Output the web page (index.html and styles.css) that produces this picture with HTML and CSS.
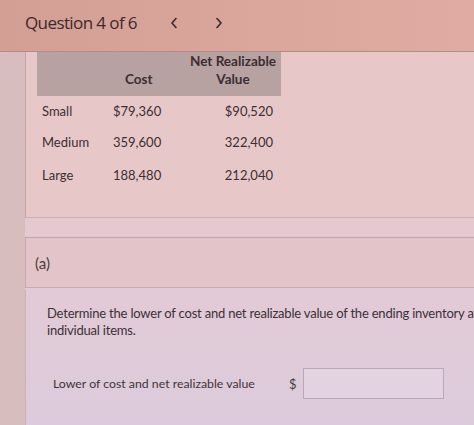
FILE: index.html
```html
<!DOCTYPE html>
<html>
<head>
<meta charset="utf-8">
<link rel="stylesheet" href="styles.css">
</head>
<body>
<div class="page">
  <header class="topbar">
    <span class="qtitle">Question 4 of 6</span>
    <span class="nav">
      <svg class="chev" width="8" height="12" viewBox="0 0 8 12"><path d="M6 1.5 L2 6 L6 10.5" fill="none" stroke="#3a2a2a" stroke-width="1.6" stroke-linecap="round" stroke-linejoin="round"/></svg>
      <svg class="chev" width="8" height="12" viewBox="0 0 8 12"><path d="M2 1.5 L6 6 L2 10.5" fill="none" stroke="#3a2a2a" stroke-width="1.6" stroke-linecap="round" stroke-linejoin="round"/></svg>
    </span>
  </header>
  <div class="main">
    <div class="rail"></div>
    <div class="content">
      <section class="card data-card">
        <table class="data">
          <colgroup>
            <col class="w-label">
            <col class="w-cost">
            <col class="w-nrv">
          </colgroup>
          <thead>
            <tr>
              <th class="c-label"></th>
              <th class="c-cost">Cost</th>
              <th class="c-nrv">Net Realizable<br>Value</th>
            </tr>
          </thead>
          <tbody>
            <tr class="r1"><td class="c-label">Small</td><td class="c-cost">$79,360</td><td class="c-nrv">$90,520</td></tr>
            <tr><td class="c-label">Medium</td><td class="c-cost">359,600</td><td class="c-nrv">322,400</td></tr>
            <tr><td class="c-label">Large</td><td class="c-cost">188,480</td><td class="c-nrv">212,040</td></tr>
          </tbody>
        </table>
      </section>
      <section class="part-head">
        <span class="part-label">(a)</span>
      </section>
      <section class="part-body">
        <p class="prompt">Determine the lower of cost and net realizable value of the ending inventory at<br>individual items.</p>
        <div class="answer-row">
          <span class="answer-label">Lower of cost and net realizable value</span>
          <span class="currency">$</span>
          <span class="answer-input"></span>
        </div>
      </section>
    </div>
  </div>
</div>
</body>
</html>
```

FILE: styles.css
```css
html, body {
  margin: 0;
  padding: 0;
}
body {
  width: 474px;
  height: 425px;
  overflow: hidden;
  font-family: "Lato", "Open Sans", sans-serif;
  color: #3b3034;
}
.page {
  width: 474px;
  height: 425px;
  display: flex;
  flex-direction: column;
  background: linear-gradient(180deg, #dcbcbc 0%, #e6c6c8 35%, #e4cad4 60%, #dccbdc 100%);
}
.topbar {
  height: 52px;
  flex: 0 0 52px;
  box-sizing: border-box;
  display: flex;
  align-items: center;
  padding-left: 25px;
  background: linear-gradient(90deg, #d39e93 0%, #dba69b 60%, #e0aba2 100%);
  border-bottom: 1px solid #b98a82;
  box-shadow: 0 1px 2px rgba(120, 70, 70, 0.35);
}
.qtitle {
  font-family: "Open Sans", sans-serif;
  font-size: 17px;
  letter-spacing: -0.6px;
  color: #3a2a2c;
  padding-bottom: 7px;
}
.nav {
  display: flex;
  gap: 37px;
  margin-left: 33px;
  padding-bottom: 5px;
}
.chev {
  display: block;
}
.main {
  flex: 1;
  display: flex;
}
.rail {
  width: 25px;
  flex: 0 0 25px;
  background: #d8bdbf;
}
.content {
  flex: 1;
  display: flex;
  flex-direction: column;
}
.card {
  border-left: 1px solid #c3a5a8;
}
.data-card {
  height: 166px;
  box-sizing: border-box;
  padding-left: 11px;
  border-bottom: 1px solid #cbb0b3;
  background: #e8c7c8;
}
.data {
  border-collapse: collapse;
  table-layout: fixed;
  width: 244px;
  font-size: 13px;
  color: #3a2f33;
}
.w-label { width: 68px; }
.w-cost { width: 80px; }
.w-nrv { width: 96px; }
.data thead tr {
  background: #b8a1a1;
  height: 44px;
}
.data th {
  font-weight: 700;
  font-size: 13.5px;
  color: #3a2e31;
  line-height: 18px;
  white-space: nowrap;
  vertical-align: bottom;
  padding: 0 0 8px 0;
}
.data th.c-cost {
  text-align: left;
  padding-left: 20px;
}
.data th.c-nrv {
  text-align: center;
}
.data td {
  height: 33px;
  padding: 0;
  white-space: nowrap;
}
.data tr.r1 td {
  height: 29px;
}
.data td.c-label {
  padding-left: 5px;
}
.data td.c-cost {
  padding-left: 8px;
}
.data td.c-nrv {
  text-align: right;
  padding-right: 8px;
}
.part-head {
  margin-top: 19px;
  height: 51px;
  box-sizing: border-box;
  border-top: 1px solid #bfa5ab;
  border-bottom: 1px solid #c4abb3;
  border-left: 1px solid #c7a9ac;
  background: #e2c4c9;
  display: flex;
  align-items: center;
  padding-left: 9px;
}
.part-label {
  font-size: 15px;
  color: #4a3d42;
  margin-top: 1px;
}
.part-body {
  flex: 1;
  margin-top: 2px;
  border-left: 1px solid #c9b2bc;
  padding-left: 21px;
  padding-top: 15px;
}
.prompt {
  margin: 0;
  font-size: 13px;
  letter-spacing: -0.2px;
  line-height: 17px;
  white-space: nowrap;
  color: #3b3036;
}
.answer-row {
  display: flex;
  align-items: center;
  margin-top: 29px;
  padding-left: 6px;
}
.answer-label {
  font-size: 12.3px;
  color: #3f3439;
  width: 236px;
}
.currency {
  font-size: 13px;
  color: #4a3f45;
  width: 14px;
}
.answer-input {
  width: 141px;
  height: 31px;
  box-sizing: border-box;
  border: 1px solid #b9a9b8;
  background: #e3d2df;
}
```
